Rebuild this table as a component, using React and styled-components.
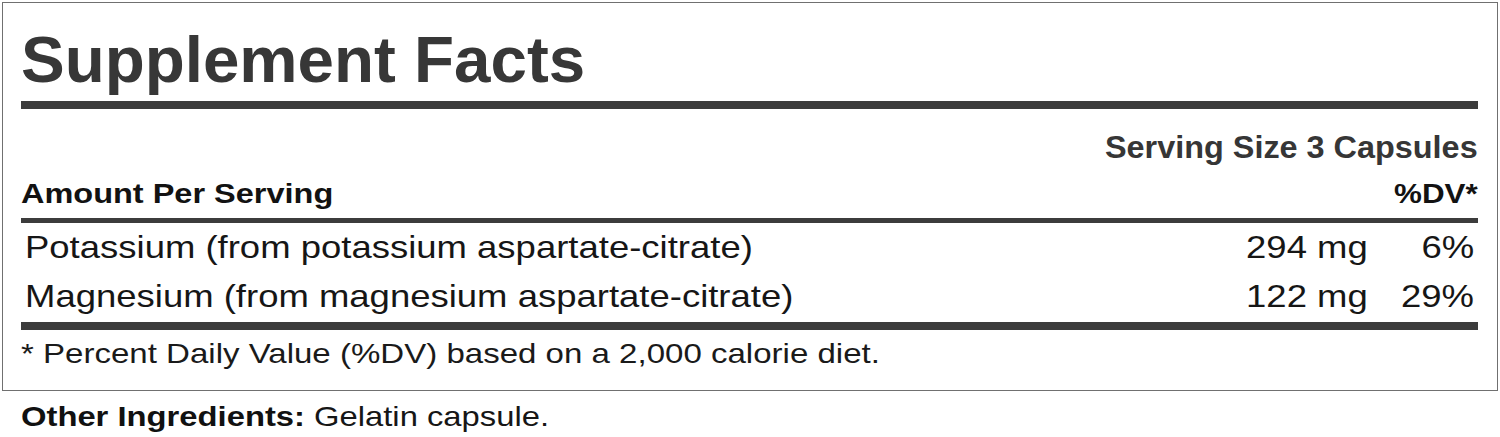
import React from 'react';
import styled, { createGlobalStyle } from 'styled-components';

const Global = createGlobalStyle`
  html, body { margin: 0; padding: 0; background: #ffffff; }
  body {
    font-family: "Liberation Sans", Arial, Helvetica, sans-serif;
    color: #161616;
  }
`;

const Page = styled.main`
  box-sizing: border-box;
  width: 1500px;
  padding: 2px 0 0 2px;
`;

const Panel = styled.section`
  box-sizing: border-box;
  width: 1496px;
  border: 1px solid #707070;
  padding: 24px 19px 18px 18px;
`;

const Title = styled.h1`
  margin: 0;
  font-size: 65.5px;
  line-height: 65px;
  font-weight: 700;
  color: #373737;
  white-space: nowrap;
`;

const Rule = styled.div`
  height: ${(p) => p.$h}px;
  margin-top: ${(p) => p.$mt || 0}px;
  background: #3c3c3c;
`;

const Wide = styled.span`
  display: inline-block;
  white-space: nowrap;
  transform: scaleX(${(p) => p.$x || 1.14});
  transform-origin: ${(p) => p.$origin || 'left'} center;
`;

const ServingLine = styled.div`
  margin-top: 21px;
  text-align: right;
  font-size: 31px;
  line-height: 36px;
  font-weight: 700;
  color: #363636;
`;

const HeadRow = styled.div`
  display: flex;
  justify-content: space-between;
  align-items: baseline;
  margin-top: 10px;
  font-size: 28px;
  line-height: 36px;
  font-weight: 700;
  color: #121212;
`;

const Rows = styled.div`
  padding: 0 4px 1px 4px;
`;

const NutrientRow = styled.div`
  display: grid;
  grid-template-columns: 1fr auto 106px;
  align-items: baseline;
  font-size: 32px;
  line-height: 49px;
  color: #161616;
`;

const Cell = styled.div`
  text-align: ${(p) => p.$align || 'left'};
`;

const Footnote = styled.p`
  margin: 6px 0 0 0;
  font-size: 28px;
  line-height: 36px;
  color: #1a1a1a;
`;

const Other = styled.p`
  margin: 8px 0 0 19px;
  font-size: 28px;
  line-height: 36px;
  color: #161616;
`;

const Strong = styled.strong`
  font-weight: 700;
  color: #111;
`;

const nutrients = [
  { name: 'Potassium (from potassium aspartate-citrate)', amount: '294 mg', dv: '6%' },
  { name: 'Magnesium (from magnesium aspartate-citrate)', amount: '122 mg', dv: '29%' },
];

export default function App() {
  return (
    <>
      <Global />
      <Page>
        <Panel>
          <Title>Supplement Facts</Title>
          <Rule $h={8} $mt={9} />
          <ServingLine>
            <Wide $x={1.045} $origin="right">Serving Size 3 Capsules</Wide>
          </ServingLine>
          <HeadRow>
            <Wide $x={1.16}>Amount Per Serving</Wide>
            <Wide $x={1.12} $origin="right">%DV*</Wide>
          </HeadRow>
          <Rule $h={5} $mt={6} />
          <Rows>
            {nutrients.map((n) => (
              <NutrientRow key={n.name}>
                <Cell><Wide>{n.name}</Wide></Cell>
                <Cell $align="right"><Wide $origin="right">{n.amount}</Wide></Cell>
                <Cell $align="right"><Wide $origin="right">{n.dv}</Wide></Cell>
              </NutrientRow>
            ))}
          </Rows>
          <Rule $h={8} />
          <Footnote>
            <Wide $x={1.18}>* Percent Daily Value (%DV) based on a 2,000 calorie diet.</Wide>
          </Footnote>
        </Panel>
        <Other>
          <Wide $x={1.17}>
            <Strong>Other Ingredients:</Strong> Gelatin capsule.
          </Wide>
        </Other>
      </Page>
    </>
  );
}
